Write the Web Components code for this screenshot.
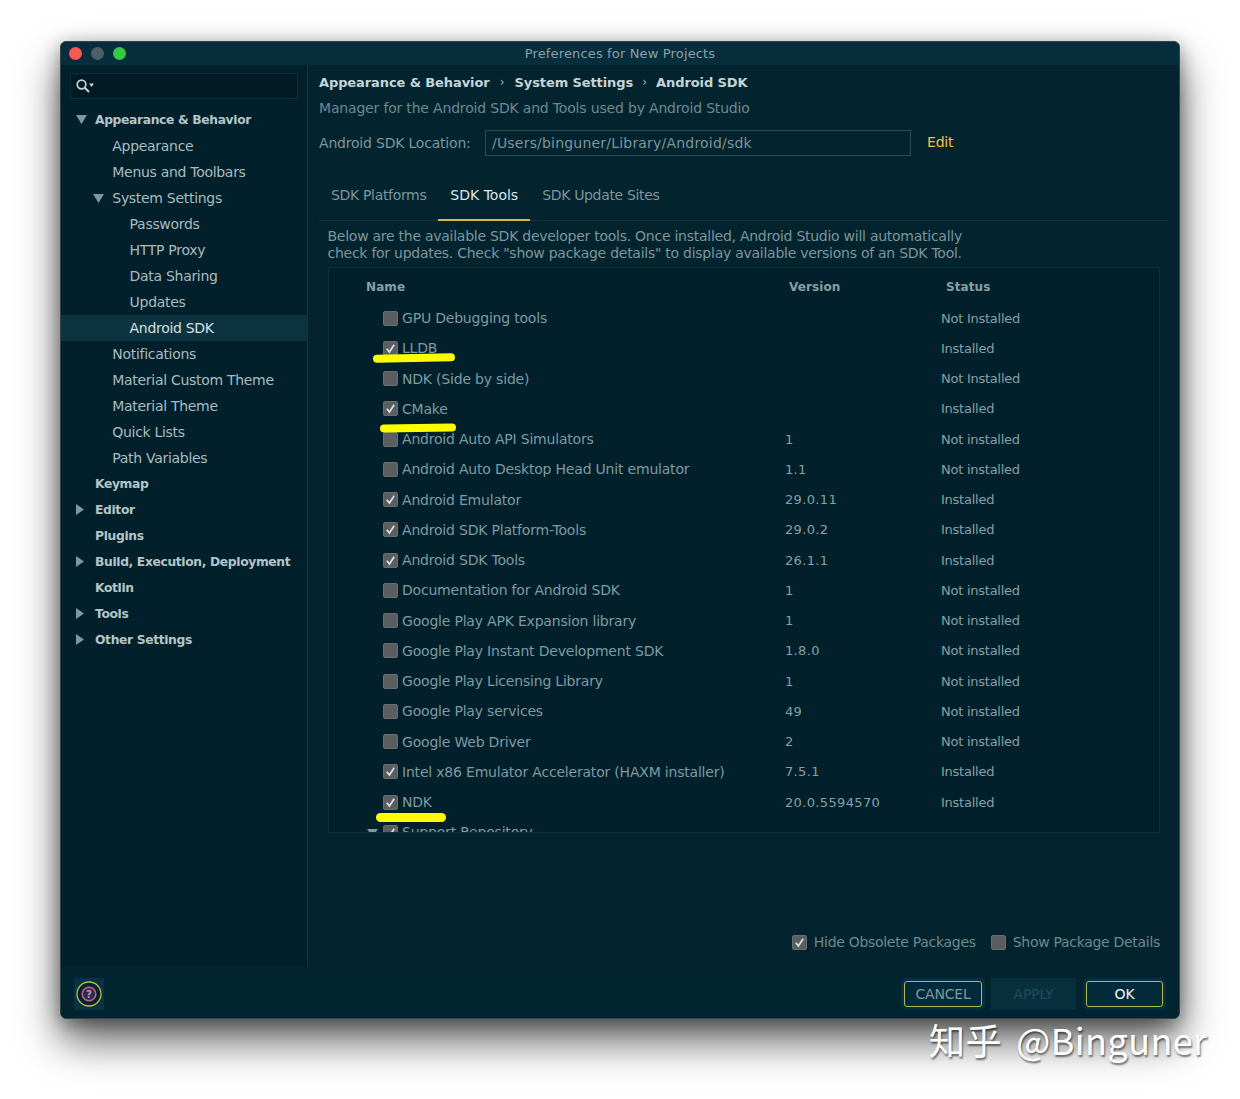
<!DOCTYPE html>
<html>
<head>
<meta charset="utf-8">
<title>Preferences for New Projects</title>
<style>
  html, body { margin: 0; height: 100%; background: #fff; overflow: hidden; }
  body { font-family: "DejaVu Sans", "Noto Sans CJK SC", sans-serif; }
</style>
</head>
<body>
<prefs-window>
  <tree-item level="0" arrow="down" bold style="height:27px;padding-top:0">Appearance &amp; Behavior</tree-item>
  <tree-item level="1">Appearance</tree-item>
  <tree-item level="1">Menus and Toolbars</tree-item>
  <tree-item level="1" arrow="down">System Settings</tree-item>
  <tree-item level="2">Passwords</tree-item>
  <tree-item level="2">HTTP Proxy</tree-item>
  <tree-item level="2">Data Sharing</tree-item>
  <tree-item level="2">Updates</tree-item>
  <tree-item level="2" selected>Android SDK</tree-item>
  <tree-item level="1">Notifications</tree-item>
  <tree-item level="1">Material Custom Theme</tree-item>
  <tree-item level="1">Material Theme</tree-item>
  <tree-item level="1">Quick Lists</tree-item>
  <tree-item level="1" style="height:25px">Path Variables</tree-item>
  <tree-item level="0" bold>Keymap</tree-item>
  <tree-item level="0" arrow="right" bold>Editor</tree-item>
  <tree-item level="0" bold>Plugins</tree-item>
  <tree-item level="0" arrow="right" bold>Build, Execution, Deployment</tree-item>
  <tree-item level="0" bold>Kotlin</tree-item>
  <tree-item level="0" arrow="right" bold>Tools</tree-item>
  <tree-item level="0" arrow="right" bold>Other Settings</tree-item>

  <sdk-panel slot="main">
    <sdk-row name="GPU Debugging tools" status="Not Installed"></sdk-row>
    <sdk-row checked name="LLDB" status="Installed"></sdk-row>
    <sdk-row name="NDK (Side by side)" status="Not Installed"></sdk-row>
    <sdk-row checked name="CMake" status="Installed"></sdk-row>
    <sdk-row name="Android Auto API Simulators" version="1" status="Not installed"></sdk-row>
    <sdk-row name="Android Auto Desktop Head Unit emulator" version="1.1" status="Not installed"></sdk-row>
    <sdk-row checked name="Android Emulator" version="29.0.11" status="Installed"></sdk-row>
    <sdk-row checked name="Android SDK Platform-Tools" version="29.0.2" status="Installed"></sdk-row>
    <sdk-row checked name="Android SDK Tools" version="26.1.1" status="Installed"></sdk-row>
    <sdk-row name="Documentation for Android SDK" version="1" status="Not installed"></sdk-row>
    <sdk-row name="Google Play APK Expansion library" version="1" status="Not installed"></sdk-row>
    <sdk-row name="Google Play Instant Development SDK" version="1.8.0" status="Not installed"></sdk-row>
    <sdk-row name="Google Play Licensing Library" version="1" status="Not installed"></sdk-row>
    <sdk-row name="Google Play services" version="49" status="Not installed"></sdk-row>
    <sdk-row name="Google Web Driver" version="2" status="Not installed"></sdk-row>
    <sdk-row checked name="Intel x86 Emulator Accelerator (HAXM installer)" version="7.5.1" status="Installed"></sdk-row>
    <sdk-row checked name="NDK" version="20.0.5594570" status="Installed"></sdk-row>
    <sdk-row checked group name="Support Repository"></sdk-row>
  </sdk-panel>
</prefs-window>

<script>
const CHECK_SVG = `<svg viewBox="0 0 15 15" width="15" height="15"><path d="M3.8 7.8 6.4 11 11.2 3.8" fill="none" stroke="#dcdcdc" stroke-width="1.8"/></svg>`;

class TreeItem extends HTMLElement {
  connectedCallback() {
    const level = +this.getAttribute("level");
    const arrow = this.getAttribute("arrow");
    let icon = "";
    if (arrow == "down") icon = `<svg width="11" height="9" viewBox="0 0 11 9"><path d="M0 0H11L5.5 9Z" fill="#7d989f"/></svg>`;
    if (arrow == "right") icon = `<svg width="9" height="11" viewBox="0 0 9 11"><path d="M0 0V11L8 5.5Z" fill="#7d989f"/></svg>`;
    this.attachShadow({ mode: "open" }).innerHTML = `
      <style>
        :host {
          display: flex;
          align-items: center;
          height: 26px;
          box-sizing: border-box;
          font-size: 14px;
          letter-spacing: -0.3px;
          white-space: nowrap;
          color: #a9bcc0;
          padding-left: ${34 + level * 17.3}px;
          position: relative;
        }
        :host([bold]) { font-weight: bold; font-size: 12.3px; letter-spacing: -0.35px; color: #b4c5c8; padding-top: 1px; }
        :host([selected]) { background: #0e3340; color: #d5e0e2; }
        .arrow { position: absolute; left: ${15 + level * 17.3}px; top: 0; bottom: 0; display: flex; align-items: center; }
      </style>
      <span class="arrow">${icon}</span><slot></slot>`;
  }
}
customElements.define("tree-item", TreeItem);

class SdkRow extends HTMLElement {
  connectedCallback() {
    const checked = this.hasAttribute("checked");
    const group = this.hasAttribute("group");
    this.attachShadow({ mode: "open" }).innerHTML = `
      <style>
        :host {
          display: grid;
          grid-template-columns: 456px 156px 1fr;
          align-items: center;
          height: 30.25px;
          font-size: 14px;
          letter-spacing: -0.2px;
          color: #7d9ba3;
          flex: none;
        }
        .name { display: flex; align-items: center; padding-left: 54px; position: relative; white-space: nowrap; }
        .box { width: 15px; height: 15px; box-sizing: border-box; background: #5a5e61; border: 1px solid #696e71; border-radius: 2px; margin-right: 4px; flex: none; }
        .box svg { display: block; margin: -1px; }
        .ver { letter-spacing: 0.35px; font-size: 13px; color: #86a0a6; }
        .st { font-size: 13px; letter-spacing: -0.25px; color: #86a0a6; }
        .tri { position: absolute; left: 38px; top: 50%; margin-top: -3px; }
      </style>
      <div class="name">
        ${group ? `<svg class="tri" width="11" height="8" viewBox="0 0 11 8"><path d="M0 0H11L5.5 8Z" fill="#7d989f"/></svg>` : ""}
        <span class="box">${checked ? CHECK_SVG : ""}</span><span>${this.getAttribute("name")}</span>
      </div>
      <div class="ver">${this.getAttribute("version") || ""}</div>
      <div class="st">${this.getAttribute("status") || ""}</div>`;
  }
}
customElements.define("sdk-row", SdkRow);

class SdkPanel extends HTMLElement {
  constructor() {
    super();
    this.attachShadow({ mode: "open" }).innerHTML = `
      <style>
        :host {
          display: flex;
          flex-direction: column;
          height: 566px;
          box-sizing: border-box;
          margin-left: 9px;
          margin-right: 8px;
          background: #01202b;
          border: 1px solid #0c3140;
          overflow: hidden;
          position: relative;
        }
        .head {
          display: grid;
          grid-template-columns: 423px 157px 1fr;
          align-items: center;
          height: 35px;
          padding: 3px 0 0 37px;
          box-sizing: border-box;
          flex: none;
          font-size: 12px;
          font-weight: bold;
          letter-spacing: .1px;
          color: #86a0a6;
        }
        .mark { position: absolute; background: #fdfd00; border-radius: 5px; }
      </style>
      <div class="head"><span>Name</span><span>Version</span><span>Status</span></div>
      <slot></slot>
      <div class="mark" style="left:44px;top:86px;width:82px;height:8px;transform:rotate(-1.2deg)"></div>
      <div class="mark" style="left:51px;top:156px;width:76px;height:8px;transform:rotate(-.8deg)"></div>
      <div class="mark" style="left:47px;top:545px;width:70px;height:9px"></div>`;
  }
}
customElements.define("sdk-panel", SdkPanel);

class PrefsWindow extends HTMLElement {
  constructor() {
    super();
    this.attachShadow({ mode: "open" }).innerHTML = `
      <style>
        :host {
          display: block;
          position: relative;
          padding: 41px 60px 0;
          height: 1099px;
          box-sizing: border-box;
          color: #86a0a6;
        }
        .win {
          height: 978px;
          display: flex;
          flex-direction: column;
          background: #03232f;
          border-radius: 6px;
          overflow: hidden;
          border: 1px solid #33464d;
          box-sizing: border-box;
          position: relative;
        }
        .shadow { position: absolute; left: 60px; top: 41px; width: 1120px; height: 978px; border-radius: 6px; box-shadow: 0 22px 42px rgba(0,0,0,.62), 0 4px 18px rgba(0,0,0,.35); }
        .title {
          height: 23px;
          flex: none;
          background: #052d3c;
          position: relative;
          display: flex;
          align-items: center;
          justify-content: center;
          font-size: 13px;
          letter-spacing: .15px;
          color: #8ba0a6;
        }
        .lights { position: absolute; left: 7.5px; top: 4.5px; display: flex; gap: 9px; }
        .lights i { width: 13px; height: 13px; border-radius: 50%; display: block; }
        .body { flex: 1; display: flex; min-height: 0; }
        .side { width: 246px; flex: none; background: #01202b; border-right: 1px solid #0f3442; }
        .search {
          margin: 8px 9px 7px 9px;
          height: 26px;
          box-sizing: border-box;
          background: #011a23;
          border: 1px solid #08303d;
          border-radius: 2px;
          display: flex;
          align-items: center;
          padding-left: 4px;
        }
        .main { flex: 1; min-width: 0; padding: 0 11px; display: flex; flex-direction: column; }
        .crumbs { display: flex; align-items: center; height: 34px; font-size: 13px; font-weight: bold; color: #c3d4d8; box-sizing: border-box; letter-spacing: -.1px; white-space: nowrap; }
        .crumbs b { font-weight: normal; font-size: 12px; width: 25px; text-align: center; color: #9fb4b9; }
        .crumbs b + span + b { width: 23px; }
        .desc { height: 18px; font-size: 14px; line-height: 18px; color: #6d8a91; letter-spacing: -.18px; white-space: nowrap; }
        .loc { display: flex; align-items: center; margin-top: 13px; height: 26px; font-size: 14px; color: #7d969c; letter-spacing: -.2px; }
        .loc .lab { width: 166px; flex: none; }
        .loc .inp { width: 426px; height: 26px; box-sizing: border-box; border: 1px solid #2c4c57; padding-left: 6px; display: flex; align-items: center; letter-spacing: .2px; color: #7d969c; flex: none; }
        .loc .edit { margin-left: 16px; color: #f3c13e; font-size: 14px; padding-bottom: 2px; }
        .tabs { display: flex; margin-top: 24px; height: 40px; border-bottom: 1px solid #0f3442; font-size: 14px; color: #7d969c; letter-spacing: -.33px; }
        .tab { padding: 0 12px 11px; display: flex; align-items: center; position: relative; box-sizing: border-box; white-space: nowrap; }
        .tab.on { color: #dfe8ea; letter-spacing: 0; }
        .tab.on::after { content: ""; position: absolute; left: 0; right: 0; bottom: -1px; height: 2px; background: #d8b53c; }
        .info { margin: 7px 0 5px 8.5px; font-size: 14px; line-height: 17px; color: #7d969c; letter-spacing: -.26px; white-space: nowrap; }
        .opts { display: flex; justify-content: flex-end; align-items: center; margin-top: 101px; padding-right: 8px; font-size: 14px; color: #6d8a91; letter-spacing: -.3px; white-space: nowrap; }
        .opts .box { width: 15px; height: 15px; box-sizing: border-box; background: #5a5e61; border: 1px solid #696e71; border-radius: 2px; margin-right: 7px; }
        .opts .box svg { display: block; margin: -1px; }
        .opts .gap { width: 15px; }
        .foot { height: 51px; flex: none; background: #022431; display: flex; align-items: center; padding: 3px 16px 0 13px; box-sizing: border-box; }
        .help { width: 30px; height: 32px; background: #093343; display: flex; align-items: center; justify-content: center; position: relative; }
        .help span { position: absolute; font: bold 10px "DejaVu Sans", sans-serif; color: #e58aa8; }
        .sp { flex: 1; }
        .btn { height: 26px; width: 78px; box-sizing: border-box; border: 1px solid #b5b84e; border-radius: 3px; background: #032a38; box-shadow: 0 0 0 3px #06303f; display: flex; align-items: center; justify-content: center; font-size: 14px; letter-spacing: -.2px; color: #7d9ba3; }
        .btn.apply { height: 32px; width: 85px; border: 0; border-radius: 0; box-shadow: none; background: #072f3e; color: #1f4c5b; margin: 0 10px 0 9px; }
        .btn.ok { color: #f0f4f5; width: 77px; }
        .mark {
          position: absolute;
          left: 929px;
          top: 1014px;
          font-family: "Noto Sans CJK SC", "Noto Sans", sans-serif;
          font-size: 36px;
          line-height: 50px;
          color: #fff;
          white-space: nowrap;
          letter-spacing: .4px;
          word-spacing: 6px;
          text-shadow: 1px 2px 2px rgba(0,0,0,.55);
        }
      </style>
      <div class="shadow"></div>
      <div class="win">
        <div class="title">
          <div class="lights"><i style="background:#fc5753"></i><i style="background:#4d5f68"></i><i style="background:#36c748"></i></div>
          Preferences for New Projects
        </div>
        <div class="body">
          <div class="side">
            <div class="search">
              <svg width="20" height="16" viewBox="0 0 20 16"><circle cx="6.5" cy="6.5" r="4.3" fill="none" stroke="#c5d2d5" stroke-width="1.7"/><path d="M9.8 9.8 14 14" stroke="#c5d2d5" stroke-width="2"/><path d="M14 5.5h5L16.5 9Z" fill="#c5d2d5"/></svg>
            </div>
            <slot></slot>
          </div>
          <div class="main">
            <div class="crumbs"><span>Appearance &amp; Behavior</span><b>›</b><span>System Settings</span><b>›</b><span>Android SDK</span></div>
            <div class="desc">Manager for the Android SDK and Tools used by Android Studio</div>
            <div class="loc"><span class="lab">Android SDK Location:</span><span class="inp">/Users/binguner/Library/Android/sdk</span><span class="edit">Edit</span></div>
            <div class="tabs">
              <div class="tab">SDK Platforms</div>
              <div class="tab on">SDK Tools</div>
              <div class="tab">SDK Update Sites</div>
            </div>
            <div class="info">Below are the available SDK developer tools. Once installed, Android Studio will automatically<br>check for updates. Check "show package details" to display available versions of an SDK Tool.</div>
            <slot name="main"></slot>
            <div class="opts">
              <span class="box">${CHECK_SVG}</span><span>Hide Obsolete Packages</span><span class="gap"></span>
              <span class="box"></span><span>Show Package Details</span>
            </div>
          </div>
        </div>
        <div class="foot">
          <div class="help">
            <svg width="28" height="28" viewBox="0 0 28 28"><circle cx="14" cy="14" r="12" fill="#03232f" stroke="#b9bd4c" stroke-width="1.3"/><circle cx="14" cy="14" r="6.8" fill="#1c3350" stroke="#cf5a86" stroke-width="1.6"/></svg>
            <span>?</span>
          </div>
          <div class="sp"></div>
          <div class="btn">CANCEL</div>
          <div class="btn apply">APPLY</div>
          <div class="btn ok">OK</div>
        </div>
      </div>
      <div class="mark">知乎 @Binguner</div>`;
  }
}
customElements.define("prefs-window", PrefsWindow);
</script>
</body>
</html>
